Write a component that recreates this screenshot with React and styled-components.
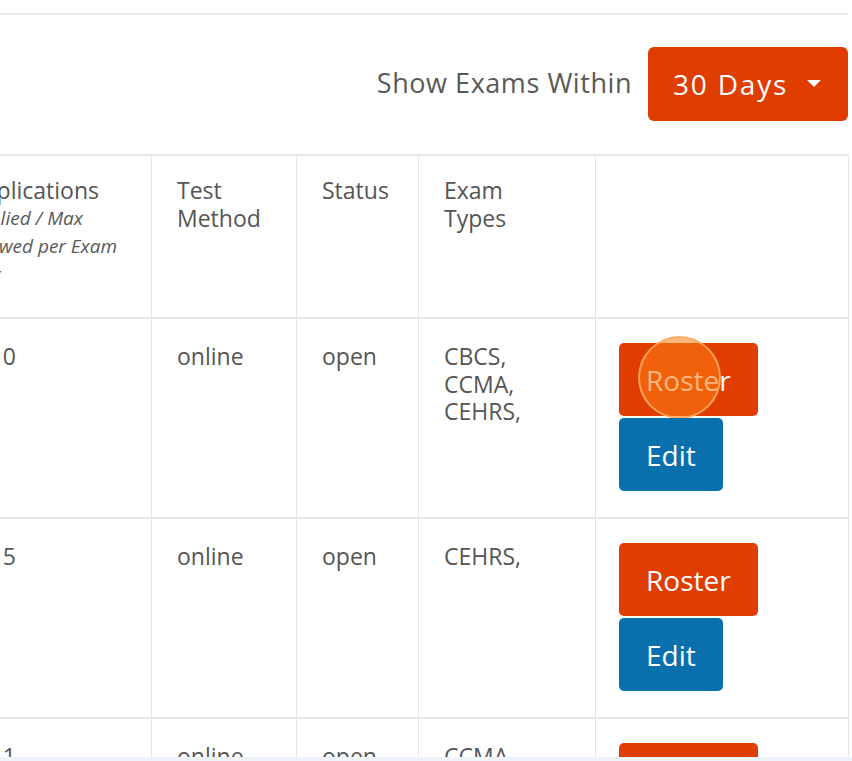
import React from "react";
import styled, { createGlobalStyle } from "styled-components";

const Global = createGlobalStyle`
  html, body { margin: 0; padding: 0; background: #ffffff; }
  body { font-family: "Open Sans", "Liberation Sans", sans-serif; overflow: hidden; }
`;

const Viewport = styled.div`
  width: 852px;
  height: 761px;
  display: flex;
  flex-direction: column;
  overflow: hidden;
`;

const Content = styled.div`
  flex: 1;
  min-height: 0;
  overflow: hidden;
  display: flex;
  flex-direction: column;
`;

const TopRule = styled.div`
  margin-top: 13px;
  width: 848px;
  height: 2px;
  background: #e9e9e9;
  flex-shrink: 0;
`;

const FilterBar = styled.div`
  display: flex;
  justify-content: flex-end;
  align-items: center;
  gap: 16px;
  width: 848px;
  margin-top: 32px;
  flex-shrink: 0;
`;

const FilterLabel = styled.span`
  font-size: 27px;
  color: #595959;
  letter-spacing: 0.55px;
  margin-top: -3px;
`;

const Dropdown = styled.button`
  display: flex;
  align-items: center;
  gap: 19px;
  width: 200px;
  height: 74px;
  padding: 0 0 0 25px;
  border: none;
  border-radius: 6px;
  background: #e03d00;
  color: #ffffff;
  font-family: inherit;
  font-size: 28px;
  font-weight: 500;
  letter-spacing: 1.8px;
  cursor: pointer;
`;

const Caret = styled.span`
  width: 0;
  height: 0;
  border-left: 7px solid transparent;
  border-right: 7px solid transparent;
  border-top: 7px solid #ffffff;
  margin-top: -2px;
`;

const Table = styled.table`
  margin-top: 33px;
  margin-left: -58px;
  width: 906px;
  table-layout: fixed;
  border-collapse: collapse;
  flex-shrink: 0;
`;

const HeadCell = styled.th`
  text-align: left;
  vertical-align: top;
  font-weight: 400;
  font-size: 23px;
  line-height: 28px;
  color: #555555;
  padding: 20px 25px 29px 25px;
  border-top: 2px solid #e6e6e6;
  border-left: 1px solid #e6e6e6;
  border-right: 1px solid #e6e6e6;
`;

const SubNote = styled.div`
  font-style: italic;
  font-size: 19px;
  line-height: 28px;
  color: #595959;
`;

const Cell = styled.td`
  vertical-align: top;
  font-size: 23px;
  line-height: 27.5px;
  color: #555555;
  padding: 24px ${(p) => (p.$actions ? "23px" : "25px")} 26px;
  border-top: 2px solid #e6e6e6;
  border-left: 1px solid #e6e6e6;
  border-right: 1px solid #e6e6e6;
`;

const ActionStack = styled.div`
  display: flex;
  flex-direction: column;
  align-items: flex-start;
  gap: 2px;
`;

const ActionButton = styled.button`
  position: relative;
  height: 73px;
  padding: 0 27px;
  border: none;
  border-radius: 5px;
  background: ${(p) => (p.$tone === "blue" ? "#0a70ad" : "#e03d00")};
  color: #ffffff;
  font-family: inherit;
  font-size: 28px;
  cursor: pointer;
`;

const ClickRing = styled.span`
  position: absolute;
  left: 19px;
  top: -7px;
  width: 83px;
  height: 83px;
  border-radius: 50%;
  background: rgba(255, 125, 20, 0.55);
  border: 2px solid rgba(255, 170, 100, 0.85);
  box-sizing: border-box;
  pointer-events: none;
`;

const BottomStrip = styled.div`
  height: 4px;
  background: #eef3f9;
  flex-shrink: 0;
`;

const rows = [
  { apps: "2/10", method: "online", status: "open", types: ["CBCS,", "CCMA,", "CEHRS,"], ring: true },
  { apps: "3/15", method: "online", status: "open", types: ["CEHRS,"] },
  { apps: "0/11", method: "online", status: "open", types: ["CCMA,"] },
];

export default function App() {
  return (
    <Viewport>
      <Global />
      <Content>
        <TopRule />
        <FilterBar>
          <FilterLabel>Show Exams Within</FilterLabel>
          <Dropdown>
            30 Days
            <Caret />
          </Dropdown>
        </FilterBar>
        <Table>
          <colgroup>
            <col style={{ width: 209 }} />
            <col style={{ width: 145 }} />
            <col style={{ width: 122 }} />
            <col style={{ width: 177 }} />
            <col style={{ width: 253 }} />
          </colgroup>
          <thead>
            <tr>
              <HeadCell>
                Applications
                <SubNote>Applied / Max Allowed per Exam Day</SubNote>
              </HeadCell>
              <HeadCell>Test Method</HeadCell>
              <HeadCell>Status</HeadCell>
              <HeadCell>Exam Types</HeadCell>
              <HeadCell />
            </tr>
          </thead>
          <tbody>
            {rows.map((r, i) => (
              <tr key={i}>
                <Cell>{r.apps}</Cell>
                <Cell>{r.method}</Cell>
                <Cell>{r.status}</Cell>
                <Cell>
                  {r.types.map((t) => (
                    <div key={t}>{t}</div>
                  ))}
                </Cell>
                <Cell $actions>
                  <ActionStack>
                    <ActionButton>
                      Roster
                      {r.ring && <ClickRing />}
                    </ActionButton>
                    <ActionButton $tone="blue">Edit</ActionButton>
                  </ActionStack>
                </Cell>
              </tr>
            ))}
          </tbody>
        </Table>
      </Content>
      <BottomStrip />
    </Viewport>
  );
}
